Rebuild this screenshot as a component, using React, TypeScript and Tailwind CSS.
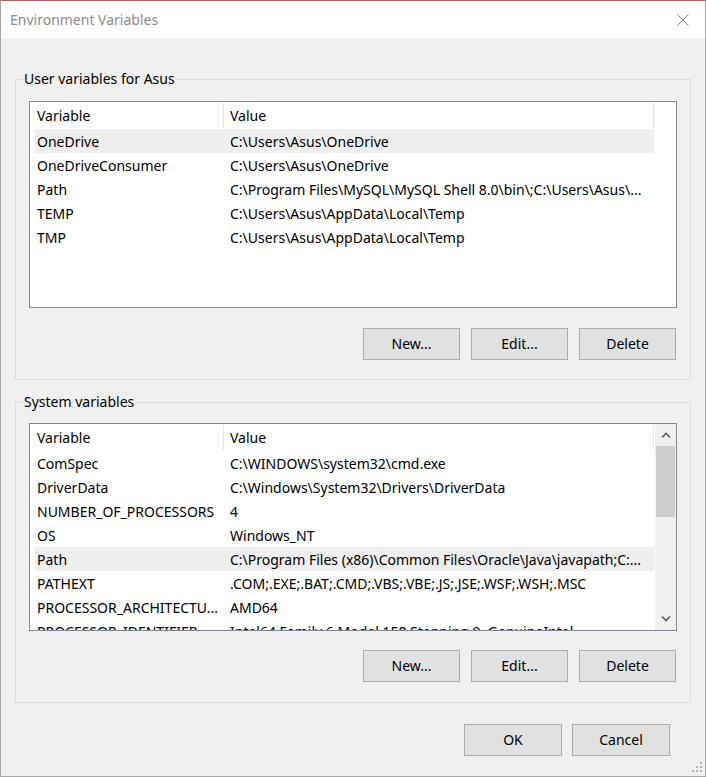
import React from 'react';

type Row = { name: string; value: string; selected?: boolean };

const userVars: Row[] = [
  { name: 'OneDrive', value: 'C:\\Users\\Asus\\OneDrive', selected: true },
  { name: 'OneDriveConsumer', value: 'C:\\Users\\Asus\\OneDrive' },
  { name: 'Path', value: 'C:\\Program Files\\MySQL\\MySQL Shell 8.0\\bin\\;C:\\Users\\Asus\\...' },
  { name: 'TEMP', value: 'C:\\Users\\Asus\\AppData\\Local\\Temp' },
  { name: 'TMP', value: 'C:\\Users\\Asus\\AppData\\Local\\Temp' },
];

const systemVars: Row[] = [
  { name: 'ComSpec', value: 'C:\\WINDOWS\\system32\\cmd.exe' },
  { name: 'DriverData', value: 'C:\\Windows\\System32\\Drivers\\DriverData' },
  { name: 'NUMBER_OF_PROCESSORS', value: '4' },
  { name: 'OS', value: 'Windows_NT' },
  { name: 'Path', value: 'C:\\Program Files (x86)\\Common Files\\Oracle\\Java\\javapath;C:...', selected: true },
  { name: 'PATHEXT', value: '.COM;.EXE;.BAT;.CMD;.VBS;.VBE;.JS;.JSE;.WSF;.WSH;.MSC' },
  { name: 'PROCESSOR_ARCHITECTU...', value: 'AMD64' },
  { name: 'PROCESSOR_IDENTIFIER', value: 'Intel64 Family 6 Model 158 Stepping 9, GenuineIntel' },
];

const WinButton = ({ label, wide }: { label: string; wide?: boolean }) => (
  <button
    className={`${wide ? 'w-[98px]' : 'w-[97px]'} h-[32px] bg-[#e1e1e1] border border-[#adadad] text-[14px] text-black leading-none`}
  >
    {label}
  </button>
);

const VarList = ({ rows, scroll, height }: { rows: Row[]; scroll?: boolean; height: string }) => (
  <div className={`${height} border border-[#828790] bg-white flex overflow-hidden`}>
    <div className="w-[625px] shrink-0 pl-[5px] overflow-hidden">
      {/* header */}
      <div className="flex h-[27px] items-center">
        <div className="w-[189px] h-[25px] border-r border-[#e5e5e5] pl-[2px] flex items-center">Variable</div>
        <div className="w-[430px] h-[25px] border-r border-[#e5e5e5] pl-[6px] flex items-center">Value</div>
      </div>
      {rows.map((r) => (
        <div
          key={r.name}
          className={`flex h-[24px] w-[619px] items-center whitespace-nowrap ${r.selected ? 'bg-[#efefef]' : ''}`}
        >
          <div className="w-[189px] pl-[2px] overflow-hidden">{r.name}</div>
          <div className="w-[430px] pl-[6px] overflow-hidden">{r.value}</div>
        </div>
      ))}
    </div>
    {scroll ? (
      <div className="w-[21px] shrink-0 bg-[#f0f0f0] flex flex-col">
        <div className="h-[22px] flex items-center justify-center">
          <svg width="10" height="6" viewBox="0 0 10 6">
            <path d="M1 5.5 L5 1.5 L9 5.5" fill="none" stroke="#606060" strokeWidth="1.6" />
          </svg>
        </div>
        <div className="h-[71px] bg-[#cdcdcd] mx-[1px]" />
        <div className="flex-1" />
        <div className="h-[22px] flex items-center justify-center">
          <svg width="10" height="6" viewBox="0 0 10 6">
            <path d="M1 0.5 L5 4.5 L9 0.5" fill="none" stroke="#606060" strokeWidth="1.6" />
          </svg>
        </div>
      </div>
    ) : null}
  </div>
);

const Group = ({
  title,
  children,
  className,
}: {
  title: string;
  children: React.ReactNode;
  className?: string;
}) => (
  <fieldset className={`border border-[#dcdcdc] px-[13px] ${className ?? ''}`}>
    <legend className="-ml-[6px] px-[1px] h-[20px] leading-[20px]">{title}</legend>
    {children}
  </fieldset>
);

export default function App() {
  return (
    <div
      className="relative w-[706px] h-[777px] bg-[#f0f0f0] border-x border-b border-[#a6a6a6] border-t border-t-[#a86464] flex flex-col text-[14px] text-black"
      style={{ fontFamily: '"Noto Sans", "Open Sans", sans-serif' }}
    >
      {/* title bar */}
      <div className="h-[37px] bg-white flex items-center justify-between pl-[9px] pr-[16px] shrink-0">
        <span className="text-[14px] text-[#8c8c8c]">Environment Variables</span>
        <svg width="12" height="12" viewBox="0 0 12 12">
          <path d="M0.5 0.5 L11.5 11.5 M11.5 0.5 L0.5 11.5" stroke="#7a7a7a" strokeWidth="1" />
        </svg>
      </div>

      <div className="flex flex-col pl-[14px] pr-[14px] pt-[31px]">
        <Group title="User variables for Asus" className="pb-[19px]">
          <div className="pt-[12px]">
            <VarList rows={userVars} height="h-[207px]" />
          </div>
          <div className="flex justify-end gap-[11px] mt-[20px] pr-[1px]">
            <WinButton label="New..." />
            <WinButton label="Edit..." />
            <WinButton label="Delete" />
          </div>
        </Group>

        <Group title="System variables" className="pb-[20px] mt-[12px]">
          <div className="pt-[11px]">
            <VarList rows={systemVars} scroll height="h-[208px]" />
          </div>
          <div className="flex justify-end gap-[11px] mt-[19px] pr-[1px]">
            <WinButton label="New..." />
            <WinButton label="Edit..." />
            <WinButton label="Delete" />
          </div>
        </Group>

        <div className="flex justify-end gap-[10px] mt-[21px] pr-[21px]">
          <WinButton label="OK" wide />
          <WinButton label="Cancel" wide />
        </div>
      </div>

      {/* resize grip */}
      <div className="absolute right-[2px] bottom-[3px] w-[11px] h-[11px]">
        <svg width="11" height="11" viewBox="0 0 11 11">
          <g fill="#b4b4b4">
            <rect x="8" y="0" width="2" height="2" />
            <rect x="4" y="4" width="2" height="2" />
            <rect x="8" y="4" width="2" height="2" />
            <rect x="0" y="8" width="2" height="2" />
            <rect x="4" y="8" width="2" height="2" />
            <rect x="8" y="8" width="2" height="2" />
          </g>
        </svg>
      </div>
    </div>
  );
}
